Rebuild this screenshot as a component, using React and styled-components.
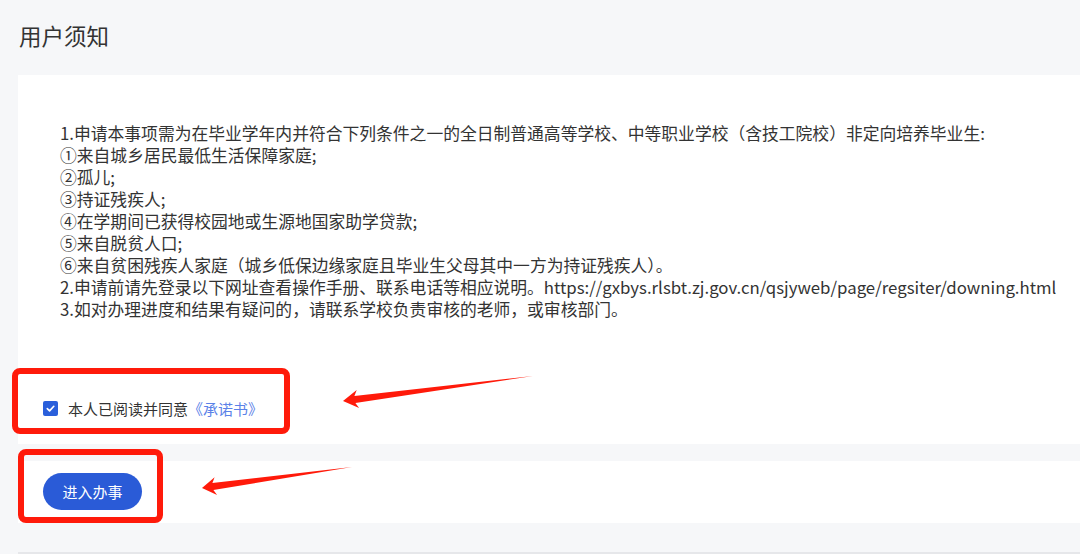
import React from 'react';
import styled, { createGlobalStyle } from 'styled-components';

const Global = createGlobalStyle`
  html, body {
    margin: 0;
    background: #f6f7f9;
    font-family: "Noto Sans CJK SC", "Noto Sans", sans-serif;
    color: #333;
  }
`;

const Page = styled.div`
  position: relative;
  width: 1080px;
  height: 554px;
  overflow: hidden;
  box-sizing: border-box;
  padding-left: 18px;
  display: flex;
  flex-direction: column;
`;

const Header = styled.div`
  height: 75px;
  display: flex;
  align-items: center;
  padding-left: 1px;
  padding-bottom: 6px;
  box-sizing: border-box;
`;

const Title = styled.h1`
  margin: 0;
  font-size: 22.5px;
  font-weight: 400;
  color: #333;
`;

const Card = styled.section`
  background: #fff;
  height: ${p => p.h}px;
  margin-top: ${p => p.gap || 0}px;
  box-sizing: border-box;
  padding: ${p => p.pad};
  display: flex;
  flex-direction: column;
`;

const Notice = styled.div`
  padding-left: 17px;
  font-size: 16.8px;
  line-height: 22px;
  color: #333;
`;

const Line = styled.p`
  margin: 0;
  white-space: nowrap;
`;

const AgreeRow = styled.label`
  margin-top: auto;
  margin-bottom: 25px;
  display: flex;
  align-items: center;
  gap: 10px;
  font-size: 15px;
  color: #333;
`;

const Box = styled.span`
  width: 15px;
  height: 15px;
  border-radius: 2px;
  background: #2a5fdb;
  display: inline-flex;
  align-items: center;
  justify-content: center;
`;

const Link = styled.a`
  color: #5b82e8;
  text-decoration: none;
`;

const Button = styled.button`
  width: 99px;
  height: 37px;
  border: none;
  border-radius: 19px;
  background: #2a5bd7;
  color: #fff;
  font-family: inherit;
  font-size: 15px;
`;

const Footer = styled.div`
  flex: 1;
  border-bottom: 2px solid #e6e7ea;
`;

const Mark = styled.div`
  position: absolute;
  left: ${p => p.x}px;
  top: ${p => p.y}px;
  width: ${p => p.w}px;
  height: ${p => p.h}px;
  box-sizing: border-box;
  border: 6px solid #ff1a0a;
  border-radius: 8px;
`;

const Arrow = styled.svg`
  position: absolute;
  left: ${p => p.x}px;
  top: ${p => p.y}px;
`;

const lines = [
  '1.申请本事项需为在毕业学年内并符合下列条件之一的全日制普通高等学校、中等职业学校（含技工院校）非定向培养毕业生:',
  '①来自城乡居民最低生活保障家庭;',
  '②孤儿;',
  '③持证残疾人;',
  '④在学期间已获得校园地或生源地国家助学贷款;',
  '⑤来自脱贫人口;',
  '⑥来自贫困残疾人家庭（城乡低保边缘家庭且毕业生父母其中一方为持证残疾人）。',
  '2.申请前请先登录以下网址查看操作手册、联系电话等相应说明。https://gxbys.rlsbt.zj.gov.cn/qsjyweb/page/regsiter/downing.html',
  '3.如对办理进度和结果有疑问的，请联系学校负责审核的老师，或审核部门。',
];

export default function App() {
  return (
    <Page>
      <Global />
      <Header>
        <Title>用户须知</Title>
      </Header>
      <Card h={369} pad="47px 0 0 25px">
        <Notice>
          {lines.map(l => (
            <Line key={l}>{l}</Line>
          ))}
        </Notice>
        <AgreeRow>
          <Box>
            <svg width="11" height="11" viewBox="0 0 12 12">
              <path d="M2.5 6.2 L5 8.6 L9.6 3.6" fill="none" stroke="#fff" strokeWidth="1.8" strokeLinecap="round" strokeLinejoin="round" />
            </svg>
          </Box>
          <span>
            本人已阅读并同意<Link href="#">《承诺书》</Link>
          </span>
        </AgreeRow>
      </Card>
      <Card h={62} gap={17} pad="12px 0 0 25px">
        <Button>进入办事</Button>
      </Card>
      <Footer />

      <Mark x={12} y={368} w={278} h={66} />
      <Mark x={18} y={449} w={145} h={74} />
      <Arrow x={340} y={372} width="200" height="40" viewBox="0 0 200 40">
        <polygon points="3,29 16.7,18.1 14.4,23.9 193,4 15.4,30.9 19.1,35.9" fill="#ff1a0a" />
      </Arrow>
      <Arrow x={198} y={462} width="160" height="36" viewBox="0 0 160 36">
        <polygon points="4,26 16.6,15.2 14.4,21 154,5 15.4,28 19.1,33" fill="#ff1a0a" />
      </Arrow>
    </Page>
  );
}
